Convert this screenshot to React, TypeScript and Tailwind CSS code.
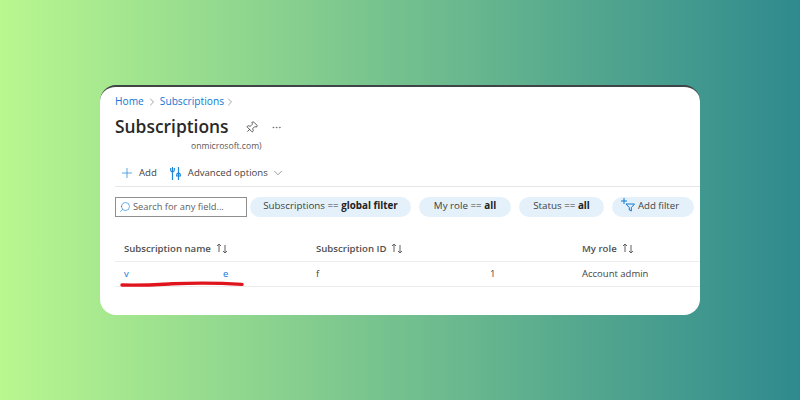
import { ChevronDown, ChevronRight, Ellipsis, Pin, Plus, Search } from 'lucide-react'

function SortIcon() {
  return (
    <svg width="15" height="11" viewBox="0 0 15 11" fill="none" stroke="#5f5f5f" strokeWidth="1" className="shrink-0">
      <path d="M4 9V1M2 3l2-2 2 2" />
      <path d="M10 2v8M8 8l2 2 2-2" />
    </svg>
  )
}

function FilterPill({ label, value, className }: { label: string; value: string; className: string }) {
  return (
    <div className={`h-[20px] rounded-full bg-[#e5f1fa] flex items-center justify-center text-[9.8px] text-[#404040] whitespace-nowrap ${className}`}>
      <span>{label} == <b className="text-[#222222] font-bold">{value}</b></span>
    </div>
  )
}

function ColHeader({ label, className }: { label: string; className: string }) {
  return (
    <div className={`flex items-center gap-[4px] ${className}`}>
      <span>{label}</span>
      <SortIcon />
    </div>
  )
}

export default function App() {
  return (
    <div
      className="w-[800px] h-[400px] flex items-center justify-center bg-[linear-gradient(90deg,#b9f78f_0%,#2f8a8e_100%)] overflow-hidden"
      style={{ fontFamily: '"Open Sans", "Noto Sans", sans-serif' }}
    >
      <div className="w-[600px] h-[230px] bg-white rounded-[16px] border-t-2 border-[#3f4446] overflow-hidden pl-[15px] flex flex-col">
        {/* Breadcrumb */}
        <div className="flex items-center h-[16px] mt-[6px] pt-[1px] text-[10.2px] text-[#0f78d4]">
          <span>Home</span>
          <ChevronRight size={12} strokeWidth={1.2} className="text-[#666666] mx-[2px]" />
          <span>Subscriptions</span>
          <ChevronRight size={12} strokeWidth={1.2} className="text-[#666666]" />
        </div>

        {/* Title */}
        <div className="flex items-center h-[26px] mt-[5px]">
          <h1 className="text-[17.4px] leading-none font-semibold text-[#292929]">Subscriptions</h1>
          <Pin size={13} strokeWidth={1.4} className="text-[#333333] ml-[16px] rotate-45" />
          <Ellipsis size={11} strokeWidth={1.2} className="text-[#555555] ml-[13px]" />
        </div>
        <div className="h-[12px] text-[8.6px] leading-[12px] text-[#595959] pl-[76px]">onmicrosoft.com)</div>

        {/* Toolbar */}
        <div className="flex items-center h-[20px] mt-[11px] text-[9.6px] text-[#444444]">
          <Plus size={16} strokeWidth={1.1} className="text-[#1f86dc] ml-[4px]" />
          <span className="ml-[4px]">Add</span>
          <svg width="11" height="15" viewBox="0 0 11 15" fill="none" stroke="#1f86dc" strokeWidth="1.2" className="ml-[13px]">
            <path d="M2.500 1v13M8.500 1v13" />
            <path d="M.7 2v2a1.800 1.800 0 0 0 3.600 0V2M6.700 9a1.800 1.800 0 0 1 3.600 0v1H6.700z" />
          </svg>
          <span className="ml-[7px]">Advanced options</span>
          <ChevronDown size={14} strokeWidth={1} className="text-[#555555] ml-[3px]" />
        </div>
        <div className="h-px bg-[#e6e6e6] mt-[3px]" />

        {/* Filters */}
        <div className="flex items-center mt-[9px] h-[21px]">
          <div className="w-[132px] h-[20px] border border-[#8f8f8f] flex items-center pl-[3px] text-[9.3px] text-[#606060] whitespace-nowrap">
            <Search size={12} strokeWidth={1.2} className="text-[#0f78d4] -scale-x-100 shrink-0" />
            <span className="ml-[2px]">Search for any field...</span>
          </div>
          <FilterPill label="Subscriptions" value="global filter" className="w-[161px] ml-[3px]" />
          <FilterPill label="My role" value="all" className="w-[92px] ml-[8px]" />
          <FilterPill label="Status" value="all" className="w-[85px] ml-[8px]" />
          <div className="w-[82px] h-[20px] ml-[8px] rounded-full bg-[#e5f1fa] flex items-center pl-[8px] text-[9.6px] text-[#444444] whitespace-nowrap">
            <svg width="15" height="14" viewBox="0 0 15 14" fill="none" stroke="#0f78d4" strokeWidth="1" className="shrink-0 -mt-[3px]">
              <path d="M4 0v6M1 3h6" />
              <path d="M6 6h8.500l-3.200 3.600V13l-2-1V9.600z" />
            </svg>
            <span className="ml-[3px]">Add filter</span>
          </div>
        </div>

        {/* Table */}
        <div className="flex items-center h-[25px] mt-[20px] pl-[9px] text-[9.6px] font-semibold text-[#505050] border-b border-[#ededed] whitespace-nowrap">
          <ColHeader label="Subscription name" className="w-[192px]" />
          <ColHeader label="Subscription ID" className="w-[266px]" />
          <ColHeader label="My role" className="flex-1" />
        </div>
        <div className="relative flex items-center h-[25px] pl-[9px] pt-[1px] text-[9.5px] text-[#444444] border-b border-[#ededed] whitespace-nowrap">
          <div className="w-[192px] flex text-[#0f78d4]">
            <span className="w-[99px]">v</span>
            <span>e</span>
          </div>
          <div className="w-[174px]">f</div>
          <div className="w-[92px]">1</div>
          <div>Account admin</div>
          <svg width="124" height="7" viewBox="0 0 124 7" fill="none" className="absolute left-[5px] top-[18px]">
            <path d="M2 5c20 .6 34-.3 50-1.200 22-1 46-1 70 .6" stroke="#e0141c" strokeWidth="3.400" strokeLinecap="round" />
          </svg>
        </div>
      </div>
    </div>
  )
}
